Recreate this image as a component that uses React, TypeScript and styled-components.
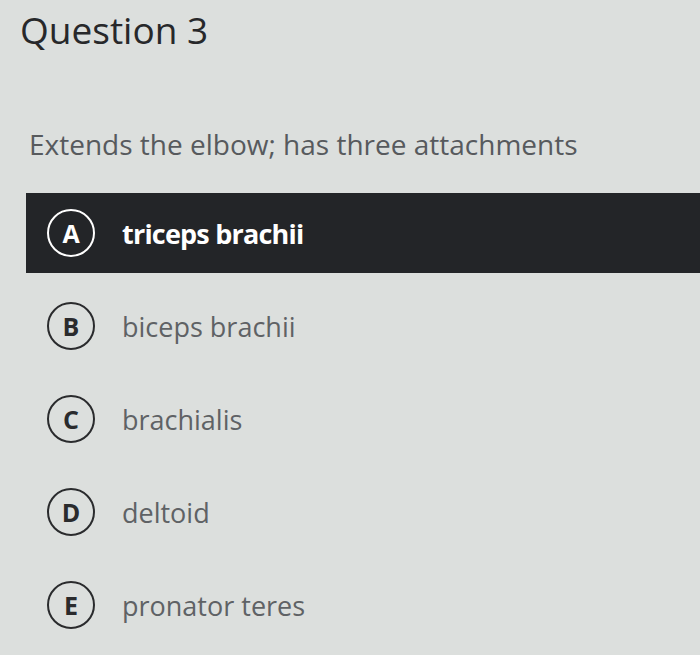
import React from 'react';
import styled, { createGlobalStyle } from 'styled-components';

const GlobalStyle = createGlobalStyle`
  html, body {
    margin: 0;
    padding: 0;
    background: #dcdfdd;
  }
  body {
    font-family: "Open Sans", "Noto Sans", sans-serif;
  }
`;

const Page = styled.div`
  width: 700px;
  height: 655px;
  overflow: hidden;
  background: #dcdfdd;
`;

const Title = styled.h2`
  margin: 0;
  padding: 5px 0 0 20px;
  font-size: 37px;
  font-weight: 400;
  line-height: 50px;
  color: #27282a;
`;

const Prompt = styled.p`
  margin: 69px 0 0 29px;
  font-size: 28px;
  line-height: 40px;
  color: #575a5d;
`;

const Choices = styled.div`
  display: flex;
  flex-direction: column;
  gap: 13px;
  margin: 29px 0 0 26px;
`;

const Choice = styled.div<{ $selected?: boolean }>`
  display: flex;
  align-items: center;
  gap: 27px;
  height: 80px;
  padding-left: 21px;
  background: ${({ $selected }) => ($selected ? '#232528' : 'transparent')};
  color: ${({ $selected }) => ($selected ? '#ffffff' : '#5f6265')};
`;

const Letter = styled.span<{ $selected?: boolean }>`
  display: flex;
  align-items: center;
  justify-content: center;
  box-sizing: border-box;
  width: 48px;
  height: 48px;
  border-radius: 50%;
  border: 2px solid ${({ $selected }) => ($selected ? '#ffffff' : '#2a2b2d')};
  font-size: 25px;
  font-weight: 700;
  color: ${({ $selected }) => ($selected ? '#ffffff' : '#2a2b2d')};
`;

const Label = styled.span<{ $selected?: boolean }>`
  font-size: 27px;
  font-weight: ${({ $selected }) => ($selected ? 700 : 400)};
  letter-spacing: ${({ $selected }) => ($selected ? '-0.8px' : '0')};
`;

const options = [
  { key: 'A', text: 'triceps brachii' },
  { key: 'B', text: 'biceps brachii' },
  { key: 'C', text: 'brachialis' },
  { key: 'D', text: 'deltoid' },
  { key: 'E', text: 'pronator teres' },
];

const App: React.FC = () => {
  const selected = 'A';

  return (
    <Page>
      <GlobalStyle />
      <Title>Question 3</Title>
      <Prompt>Extends the elbow; has three attachments</Prompt>
      <Choices>
        {options.map((opt) => {
          const isSel = opt.key === selected;
          return (
            <Choice key={opt.key} $selected={isSel}>
              <Letter $selected={isSel}>{opt.key}</Letter>
              <Label $selected={isSel}>{opt.text}</Label>
            </Choice>
          );
        })}
      </Choices>
    </Page>
  );
};

export default App;
